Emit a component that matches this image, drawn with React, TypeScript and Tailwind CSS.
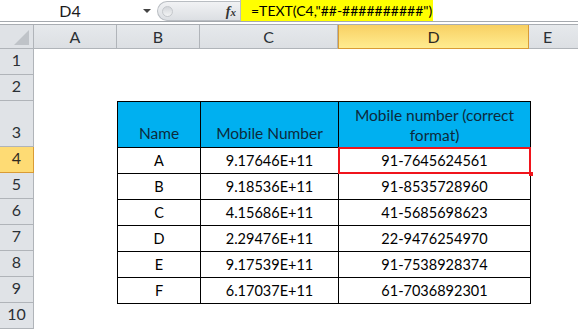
import React from "react";

const columns = [
  { label: "A", w: "w-[83px]" },
  { label: "B", w: "w-[83px]" },
  { label: "C", w: "w-[138px]" },
  { label: "D", w: "w-[191px]" },
];

const rowNumbers = [1, 2, 3, 4, 5, 6, 7, 8, 9, 10];

const people = [
  { name: "A", raw: "9.17646E+11", fixed: "91-7645624561" },
  { name: "B", raw: "9.18536E+11", fixed: "91-8535728960" },
  { name: "C", raw: "4.15686E+11", fixed: "41-5685698623" },
  { name: "D", raw: "2.29476E+11", fixed: "22-9476254970" },
  { name: "E", raw: "9.17539E+11", fixed: "91-7538928374" },
  { name: "F", raw: "6.17037E+11", fixed: "61-7036892301" },
];

const FormulaBar = () => (
  <div className="flex h-[22px] border-b border-[#a5a9ae] bg-white">
    {/* Name box */}
    <div className="flex w-[157px] items-center">
      <span className="w-[140px] text-center text-[16px] text-[#1b1b1b]">D4</span>
      <span className="ml-[3px] h-0 w-0 border-x-[4px] border-t-[4px] border-x-transparent border-t-[#444]"></span>
    </div>
    <div className="mt-[1px] flex h-[20px] w-[83px] items-center rounded-l-full border border-r-0 border-[#b9bdc2] bg-gradient-to-b from-[#f1f2f4] to-[#dcdfe3]">
      <span className="ml-[4px] h-[11px] w-[11px] rounded-full border border-[#c4c7cb] bg-gradient-to-b from-[#d3d6da] to-[#f3f4f5]"></span>
      <span className="ml-auto mr-[4px] font-['Liberation_Serif',serif] text-[14px] font-bold italic text-[#333]">
        f<span className="text-[11px]">x</span>
      </span>
    </div>
    <div className="flex h-[21px] w-[193px] items-center whitespace-nowrap border-l border-[#b9bdc2] bg-[#ffff00] pl-[10px] text-[14px] text-black">
      =TEXT(C4,"##-##########")
    </div>
  </div>
);

const ColumnHeaders = () => (
  <div className="flex h-[25px] border-t border-[#a9adb2]">
    <div className="relative w-[34px] border-r border-b border-[#b0b4b9] bg-[#dfe2e6]">
      <span className="absolute bottom-[3px] right-[4px] h-0 w-0 border-b-[15px] border-l-[15px] border-b-[#bfc3c8] border-l-transparent"></span>
    </div>
    {columns.map((col) =>
      col.label === "D" ? (
        <div
          key={col.label}
          className={`${col.w} flex items-center justify-center border border-t-0 border-[#d99b35] bg-gradient-to-b from-[#f8d062] to-[#ffec90] text-[16px] text-[#2e2a22]`}
        >
          {col.label}
        </div>
      ) : (
        <div
          key={col.label}
          className={`${col.w} flex items-center justify-center border-r border-b border-[#b0b4b9] bg-gradient-to-b from-[#e6e9ec] to-[#dcdfe3] text-[16px] text-[#2b3035]`}
        >
          {col.label}
        </div>
      )
    )}
    <div className="flex flex-1 items-center border-b border-[#b0b4b9] bg-gradient-to-b from-[#e6e9ec] to-[#dcdfe3] pl-[14px] text-[16px] text-[#2b3035]">
      E
    </div>
  </div>
);

const RowHeaders = () => (
  <div className="flex w-[34px] flex-col">
    {rowNumbers.map((n) => (
      <div
        key={n}
        className={`flex items-end justify-center border-r border-b pb-[2px] text-[16px] ${
          n === 3 ? "h-[46px]" : "h-[26px]"
        } ${
          n === 4
            ? "border-[#d99b35] bg-[#fedb74] text-[#2e2a22]"
            : "border-[#b0b4b9] bg-[#e0e3e7] text-[#2b3035]"
        }`}
      >
        {n}
      </div>
    ))}
  </div>
);

const DataTable = () => (
  <table className="w-[413px] table-fixed border-collapse text-[14.5px]">
    <colgroup>
      <col className="w-[83px]" />
      <col className="w-[138px]" />
      <col className="w-[192px]" />
    </colgroup>
    <thead>
      <tr className="h-[46px] bg-[#00b0f0] text-[15.5px] text-[#0d2a3c]">
        <th className="border border-black pb-[2px] align-bottom font-normal">Name</th>
        <th className="border border-black pb-[2px] align-bottom font-normal">Mobile Number</th>
        <th className="border border-black px-[6px] pb-[2px] align-bottom font-normal leading-[20px]">
          Mobile number (correct format)
        </th>
      </tr>
    </thead>
    <tbody>
      {people.map((p, i) => (
        <tr key={p.name} className="h-[26px] text-black">
          <td className="border border-black text-center">{p.name}</td>
          <td className="border border-black text-center">{p.raw}</td>
          <td className="relative border border-black text-center">
            {p.fixed}
            {i === 0 && (
              <>
                <span className="absolute -left-[1px] -top-[1px] -right-[1px] -bottom-[1px] border-[2.5px] border-[#f0141c]"></span>
                <span className="absolute -bottom-[3px] -right-[3px] h-[4px] w-[4px] bg-[#f0141c]"></span>
              </>
            )}
          </td>
        </tr>
      ))}
    </tbody>
  </table>
);

export default function App() {
  return (
    <div className="h-[330px] w-[578px] overflow-hidden bg-white font-['Lato',sans-serif]">
      <FormulaBar />
      <div className="h-[2px]"></div>
      <ColumnHeaders />
      <div className="flex">
        <RowHeaders />
        <div className="flex-1 pl-[83px] pt-[52px]">
          <DataTable />
        </div>
      </div>
    </div>
  );
}
